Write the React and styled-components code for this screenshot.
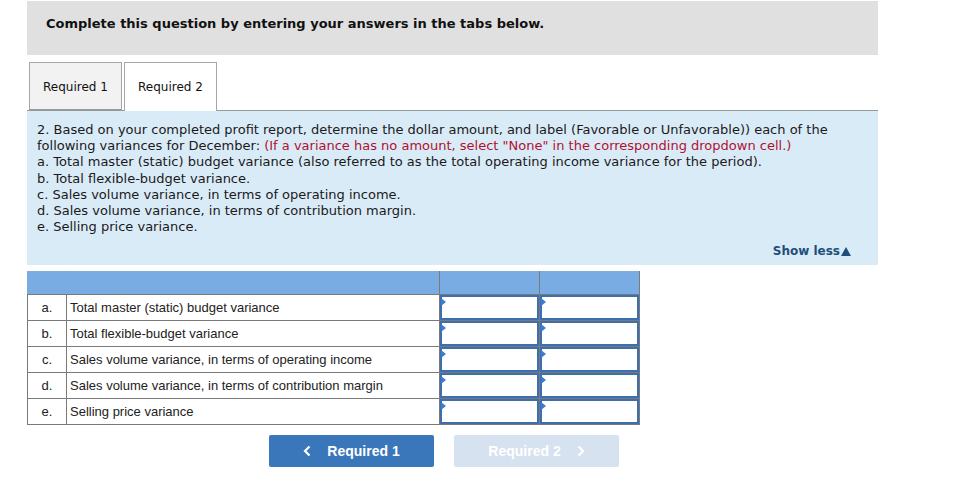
import React from "react";
import styled, { createGlobalStyle } from "styled-components";

const GlobalStyle = createGlobalStyle`
  body {
    margin: 0;
    background: #ffffff;
    font-family: "DejaVu Sans", Verdana, sans-serif;
  }
`;

const Page = styled.div`
  width: 851px;
  margin-left: 27px;
  padding-top: 1px;
`;

const Banner = styled.div`
  background: #e0e0e0;
  height: 54px;
  padding: 15px 0 0 19px;
  box-sizing: border-box;
  font-size: 13px;
  font-weight: bold;
  color: #111;
`;

const TabBar = styled.div`
  display: flex;
  align-items: flex-end;
  gap: 2px;
  margin-top: 7px;
  padding-left: 2px;
  border-bottom: 1px solid #999;
  height: 48px;
`;

const Tab = styled.div`
  width: 93px;
  box-sizing: border-box;
  border: 1px solid #a6a6a6;
  border-bottom: ${(p) => (p.$active ? "none" : "1px solid #999")};
  background: ${(p) => (p.$active ? "#ffffff" : "#f2f2f2")};
  margin-bottom: ${(p) => (p.$active ? "-1px" : "0")};
  height: ${(p) => (p.$active ? "49px" : "48px")};
  padding-bottom: ${(p) => (p.$active ? "1px" : "0")};
  padding-top: ${(p) => (p.$active ? "0" : "2px")};
  display: flex;
  align-items: center;
  justify-content: center;
  font-size: 12px;
  color: #111;
`;

const Panel = styled.div`
  background: #daebf8;
  padding: 11px 10px 5px 10px;
  font-size: 13px;
  line-height: 16.2px;
  color: #1a1a1a;
`;

const Line = styled.div`
  white-space: nowrap;
`;

const Red = styled.span`
  color: #b2102f;
`;

const ShowLess = styled.div`
  display: flex;
  justify-content: flex-end;
  align-items: center;
  gap: 1px;
  margin-top: 8px;
  padding-right: 17px;
  font-weight: bold;
  font-size: 12px;
  color: #1f4e79;
`;

const Table = styled.table`
  margin-top: 6px;
  border-collapse: collapse;
  font-family: "Liberation Sans", Arial, sans-serif;
  font-size: 13px;
  color: #222;
  width: 613px;
`;

const HeadCell = styled.th`
  background: #79ace3;
  height: 22px;
  border: 1px solid #7a7a7a;
  border-top: 1px solid #7aaee3;
  border-left: 1px solid #79ace3;
  padding: 0;
  width: ${(p) => (p.$w ? `${p.$w}px` : "auto")};
  ${(p) => p.$divided && "border-left: 1px solid #7a7a7a;"}
  &:first-child {
    border-left: 1px solid #79ace3;
    border-right: 1px solid #79ace3;
  }
`;

const Cell = styled.td`
  border: 1px solid #7a7a7a;
  height: 25px;
  padding: 0;
  width: ${(p) => (p.$w ? `${p.$w}px` : "auto")};
  text-align: ${(p) => (p.$center ? "center" : "left")};
  padding-left: ${(p) => (p.$center ? 0 : 3)}px;
`;

const InputCell = styled.td`
  border: 1px solid #7a7a7a;
  padding: 0;
  width: 99px;
  height: 25px;
`;

const Field = styled.div`
  position: relative;
  height: 21px;
  border: 2px solid #3d6fb0;
  background: #fff;
  &::before {
    content: "";
    position: absolute;
    left: -1px;
    top: 1px;
    border-left: 5px solid #3d7bd0;
    border-top: 4px solid transparent;
    border-bottom: 4px solid transparent;
  }
`;

const Nav = styled.div`
  display: flex;
  gap: 20px;
  margin: 10px 0 0 242px;
`;

const NavButton = styled.button`
  width: 165px;
  height: 32px;
  border: none;
  border-radius: 2px;
  background: ${(p) => (p.$disabled ? "#d7e2f0" : "#3a77ba")};
  color: #fff;
  font-family: "Liberation Sans", Arial, sans-serif;
  font-weight: bold;
  font-size: 14px;
  display: flex;
  align-items: center;
  justify-content: center;
  gap: 16px;
  padding: 0;
`;

const Chevron = ({ dir }) => (
  <svg width="8" height="12" viewBox="0 0 8 12">
    <path
      d={dir === "left" ? "M6.5 1.5 2 6l4.5 4.5" : "M1.5 1.5 6 6l-4.5 4.5"}
      fill="none"
      stroke="#fff"
      strokeWidth="2.2"
    />
  </svg>
);

const rows = [
  ["a.", "Total master (static) budget variance"],
  ["b.", "Total flexible-budget variance"],
  ["c.", "Sales volume variance, in terms of operating income"],
  ["d.", "Sales volume variance, in terms of contribution margin"],
  ["e.", "Selling price variance"],
];

export default function App() {
  return (
    <>
      <GlobalStyle />
      <Page>
        <Banner>Complete this question by entering your answers in the tabs below.</Banner>
        <TabBar>
          <Tab>Required 1</Tab>
          <Tab $active>Required 2</Tab>
        </TabBar>
        <Panel>
          <Line>
            2. Based on your completed profit report, determine the dollar amount, and label (Favorable or
            Unfavorable)) each of the
          </Line>
          <Line>
            following variances for December:{" "}
            <Red>(If a variance has no amount, select "None" in the corresponding dropdown cell.)</Red>
          </Line>
          <Line>a. Total master (static) budget variance (also referred to as the total operating income variance for the period).</Line>
          <Line>b. Total flexible-budget variance.</Line>
          <Line>c. Sales volume variance, in terms of operating income.</Line>
          <Line>d. Sales volume variance, in terms of contribution margin.</Line>
          <Line>e. Selling price variance.</Line>
          <ShowLess>
            Show less
            <svg width="10" height="9" viewBox="0 0 10 9">
              <path d="M5 0 10 9H0z" fill="#1f4e79" />
            </svg>
          </ShowLess>
        </Panel>
        <Table>
          <thead>
            <tr>
              <HeadCell $w={38} />
              <HeadCell />
              <HeadCell $w={99} $divided />
              <HeadCell $w={99} />
            </tr>
          </thead>
          <tbody>
            {rows.map(([k, label]) => (
              <tr key={k}>
                <Cell $w={38} $center>
                  {k}
                </Cell>
                <Cell>{label}</Cell>
                <InputCell>
                  <Field />
                </InputCell>
                <InputCell>
                  <Field />
                </InputCell>
              </tr>
            ))}
          </tbody>
        </Table>
        <Nav>
          <NavButton>
            <Chevron dir="left" />
            Required 1
          </NavButton>
          <NavButton $disabled>
            Required 2
            <Chevron dir="right" />
          </NavButton>
        </Nav>
      </Page>
    </>
  );
}
